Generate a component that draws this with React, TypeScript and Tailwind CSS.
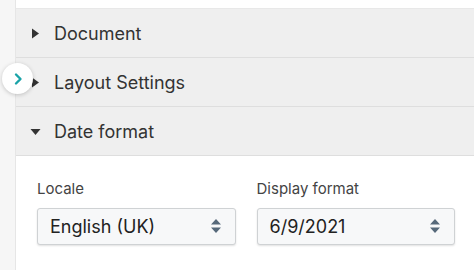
import React from 'react';

function Caret({ open }: { open?: boolean }) {
  return (
    <svg width="11" height="11" viewBox="0 0 11 11" className="shrink-0">
      {open ? <path d="M0.5 3h10L5.5 9z" fill="#333" /> : <path d="M2 0.5v10l7-5z" fill="#333" />}
    </svg>
  );
}

function Header({ title, open }: { title: string; open?: boolean }) {
  return (
    <div className="flex h-[49px] items-center gap-[13px] border-b border-[#dedede] bg-[#efefef] pl-[14px]">
      <Caret open={open} />
      <span className="text-[18px] text-[#333]">{title}</span>
    </div>
  );
}

function Select({ value }: { value: string }) {
  return (
    <div className="flex h-[37px] items-center justify-between rounded-[3px] border border-[#cfd2d4] bg-[#f7f8f9] pl-[12px] pr-[13px] shadow-[0_1px_2px_rgba(0,0,0,0.12)]">
      <span className="text-[18px] text-[#222]">{value}</span>
      <svg width="12" height="16" viewBox="0 0 12 16">
        <path d="M6 1l5 5.5H1z M6 15l5-5.5H1z" fill="#56697a" />
      </svg>
    </div>
  );
}

export default function App() {
  return (
    <div className="flex h-[270px] w-[474px] overflow-hidden bg-white font-['Inter',sans-serif]">
      <div className="relative flex w-[474px]">
        <div className="w-[16px] shrink-0 border-r border-[#e6e6e6] bg-[#f6f6f6]" />
        <div className="flex-1 pt-[8px]">
          <div className="border-t border-[#e8e8e8]">
            <Header title="Document" />
            <Header title="Layout Settings" />
            <Header title="Date format" open />
          </div>
          <div className="grid grid-cols-2 gap-[21px] pl-[21px] pr-[19px] pt-[22px]">
            <div className="flex flex-col gap-[7px]">
              <span className="text-[15px] text-[#444]">Locale</span>
              <Select value="English (UK)" />
            </div>
            <div className="flex flex-col gap-[7px]">
              <span className="text-[15px] text-[#444]">Display format</span>
              <Select value="6/9/2021" />
            </div>
          </div>
        </div>
        <div className="absolute left-[2px] top-[63px] flex h-[31px] w-[31px] items-center justify-center rounded-full bg-white shadow-[0_1px_4px_rgba(0,0,0,0.2)]">
          <svg width="10" height="14" viewBox="0 0 10 14">
            <path d="M3 2.5l4.5 4.5-4.5 4.5" stroke="#1aa3a8" strokeWidth="2.4" fill="none" strokeLinecap="round" strokeLinejoin="round" />
          </svg>
        </div>
      </div>
    </div>
  );
}
